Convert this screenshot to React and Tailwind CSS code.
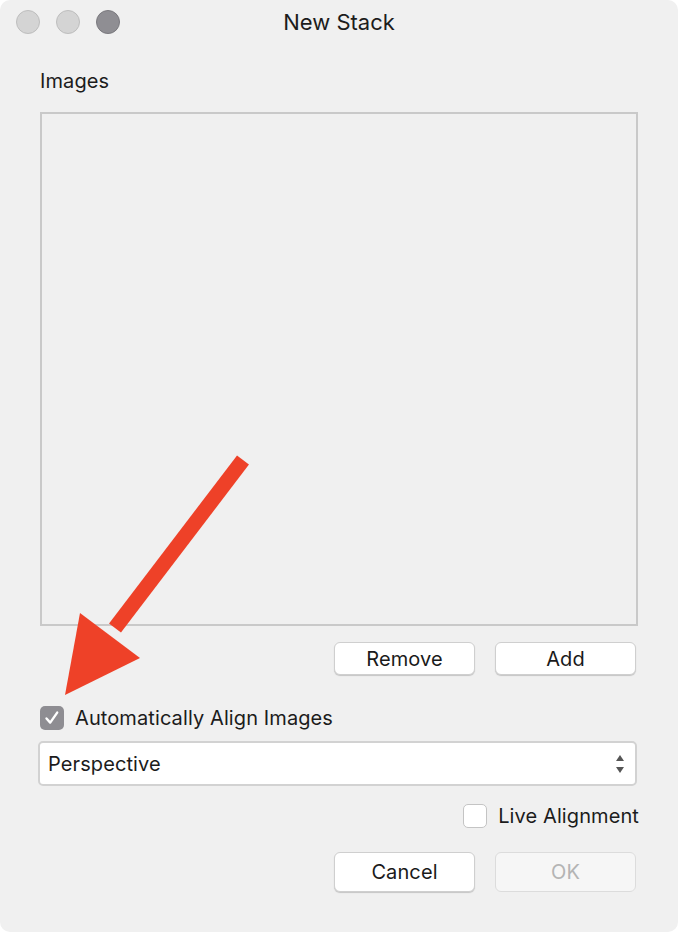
import React from "react";

const font = { fontFamily: "Inter, 'Liberation Sans', sans-serif" };

const Button = ({ children, disabled }) => (
  <button
    className={
      disabled
        ? "w-[141px] h-full rounded-[6px] bg-[#f6f6f6] border border-[#dcdcdc] text-[20px] tracking-[0.1px] text-[#b4b4b4]"
        : "w-[141px] h-full rounded-[6px] bg-white border border-[#cfcfcf] shadow-[0_1px_1px_rgba(0,0,0,0.18)] text-[20px] tracking-[0.1px] text-[#1a1a1a]"
    }
  >
    {children}
  </button>
);

const Arrow = () => (
  <svg
    className="absolute left-0 top-0 pointer-events-none"
    width="678"
    height="932"
    viewBox="0 0 678 932"
  >
    <line x1="243" y1="460" x2="115" y2="628" stroke="#ee4128" strokeWidth="15" />
    <polygon points="80,613 140,658 65,695" fill="#ee4128" />
  </svg>
);

export default function App() {
  return (
    <div className="w-[678px] h-[932px] bg-white" style={font}>
      <div className="relative w-full h-full rounded-[10px] bg-[#f0f0f0] flex flex-col overflow-hidden">
        {/* Title bar */}
        <div className="relative h-[44px] flex items-center">
          <div className="flex gap-[16px] pl-[16px]">
            <span className="w-[24px] h-[24px] rounded-full bg-[#d4d4d4] border border-[#bdbdbd]" />
            <span className="w-[24px] h-[24px] rounded-full bg-[#d4d4d4] border border-[#bdbdbd]" />
            <span className="w-[24px] h-[24px] rounded-full bg-[#8f8e93] border border-[#7a797e]" />
          </div>
          <div className="absolute inset-0 flex items-center justify-center text-[22px] text-[#1c1c1c]">
            New Stack
          </div>
        </div>

        <div className="px-[40px] pt-[25px] text-[20px] tracking-[0.1px] text-[#1c1c1c] leading-[24px]">Images</div>

        <div className="mx-[40px] mt-[19px] h-[514px] border-2 border-[#c9c9c9] bg-[#f0f0f0]" />

        <div className="flex justify-end gap-[20px] pr-[42px] mt-[16px] h-[33px]">
          <Button>Remove</Button>
          <Button>Add</Button>
        </div>

        <div className="flex items-center gap-[11px] pl-[40px] mt-[31px] h-[24px]">
          <span className="w-[24px] h-[24px] rounded-[5px] bg-[#8e8d92] flex items-center justify-center">
            <svg width="20" height="20" viewBox="0 0 20 20">
              <path d="M4.5 10.5 L8.2 14.6 L15.2 4.6" fill="none" stroke="white" strokeWidth="2.4" strokeLinecap="round" strokeLinejoin="round" />
            </svg>
          </span>
          <span className="text-[20px] tracking-[0.1px] text-[#1c1c1c]">Automatically Align Images</span>
        </div>

        <div className="ml-[38px] mr-[41px] mt-[11px] h-[45px] rounded-[5px] bg-white border-2 border-[#d2d2d2] flex items-center justify-between pl-[8px] pr-[10px]">
          <span className="text-[20px] tracking-[0.1px] text-[#1c1c1c]">Perspective</span>
          <svg width="10" height="20" viewBox="0 0 10 20">
            <polygon points="5,1 9,7 1,7" fill="#555" />
            <polygon points="1,13 9,13 5,19" fill="#555" />
          </svg>
        </div>

        <div className="flex items-center justify-end gap-[11px] pr-[39px] mt-[18px] h-[24px]">
          <span className="w-[24px] h-[24px] rounded-[5px] bg-white border border-[#c4c4c4]" />
          <span className="text-[20px] tracking-[0.1px] text-[#1c1c1c]">Live Alignment</span>
        </div>

        <div className="flex justify-end gap-[20px] pr-[42px] mt-[24px] h-[40px]">
          <Button>Cancel</Button>
          <Button disabled>OK</Button>
        </div>

        <Arrow />
      </div>
    </div>
  );
}
